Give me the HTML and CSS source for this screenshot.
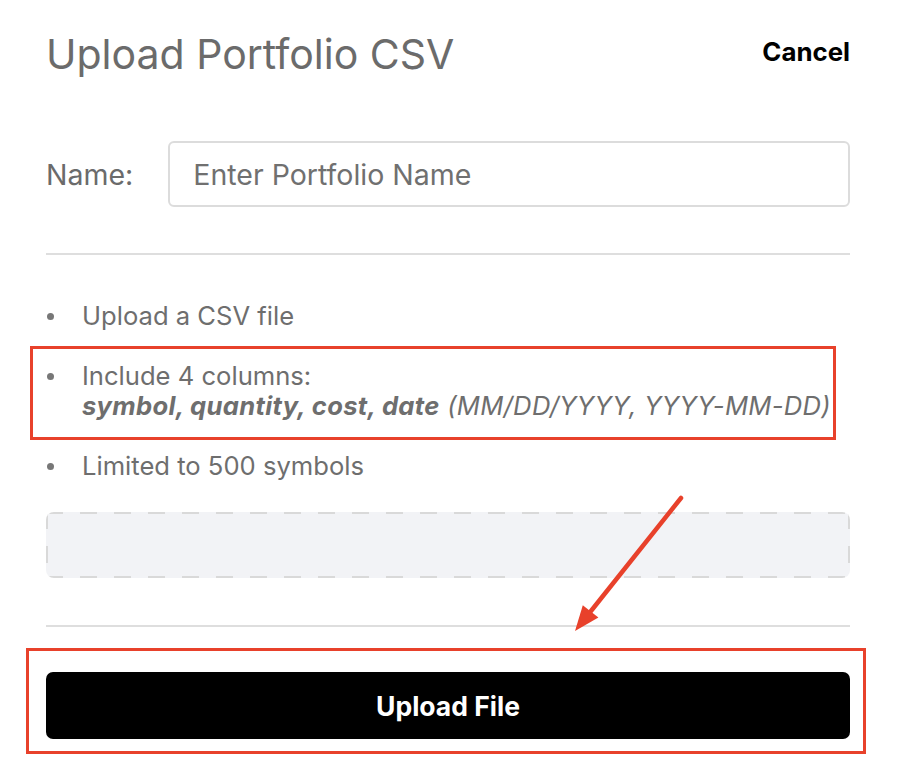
FILE: index.html
```html
<!DOCTYPE html>
<html lang="en">
<head>
<meta charset="utf-8">
<title>Upload Portfolio CSV</title>
<link rel="stylesheet" href="styles.css">
</head>
<body>
<div class="page">
  <header class="head">
    <h1 class="title">Upload Portfolio CSV</h1>
    <a class="cancel" href="#">Cancel</a>
  </header>

  <div class="name-row">
    <label class="name-label">Name:</label>
    <div class="input"><span class="placeholder">Enter Portfolio Name</span></div>
  </div>

  <hr class="divider divider-top">

  <ul class="rules">
    <li>Upload a CSV file</li>
    <li class="highlight">Include 4 columns:<br><span class="fmt"><b><i>symbol, quantity, cost, date</i></b> <i>(MM/DD/YYYY, YYYY-MM-DD)</i></span></li>
    <li>Limited to 500 symbols</li>
  </ul>

  <div class="dropzone"></div>

  <hr class="divider divider-bottom">

  <div class="btn-wrap">
    <button class="upload-btn">Upload File</button>
  </div>

  <svg class="arrow" width="900" height="768" viewBox="0 0 900 768">
    <line x1="681" y1="498" x2="591" y2="611" stroke="#e8412b" stroke-width="4.5" stroke-linecap="round"/>
    <polygon points="575,631 582.8,605.2 598.4,617.6" fill="#e8412b"/>
  </svg>
</div>
</body>
</html>
```

FILE: styles.css
```css
* { box-sizing: border-box; }

html, body {
  margin: 0;
  padding: 0;
  background: #ffffff;
}

body {
  font-family: Inter, "Noto Sans", "Liberation Sans", sans-serif;
  color: #6b6b6b;
}

.page {
  position: relative;
  width: 900px;
  height: 768px;
  padding: 30px 50px 0 46px;
  overflow: hidden;
}

.head {
  display: flex;
  align-items: center;
  justify-content: space-between;
  height: 48px;
}

.title {
  margin: 0;
  font-size: 41px;
  line-height: 48px;
  font-weight: 400;
  color: #6b6b6b;
}

.cancel {
  font-size: 25.8px;
  font-weight: 700;
  color: #000;
  text-decoration: none;
  margin-top: -6px;
}

.name-row {
  display: flex;
  align-items: center;
  gap: 35px;
  margin-top: 63px;
}

.name-label {
  font-size: 28.5px;
  color: #6b6b6b;
}

.input {
  flex: 1;
  height: 66px;
  border: 2px solid #dcdcdc;
  border-radius: 6px;
  display: flex;
  align-items: center;
  padding-left: 23px;
}

.placeholder {
  font-size: 28.5px;
  color: #707070;
}

.divider {
  border: 0;
  height: 2px;
  background: #dedede;
  margin: 0;
}

.divider-top { margin-top: 46px; }

.rules {
  list-style: none;
  margin: 46px 0 0;
  padding: 0;
  font-size: 25.6px;
  line-height: 30px;
  color: #6e6e6e;
}

.rules li {
  position: relative;
  padding-left: 36px;
  margin-bottom: 30px;
}

.rules li:last-child { margin-bottom: 0; }

.rules li::before {
  content: "";
  position: absolute;
  left: 1px;
  top: 12px;
  width: 7px;
  height: 7px;
  border-radius: 50%;
  background: #777;
}

.rules b { font-weight: 700; }

.fmt {
  white-space: nowrap;
  letter-spacing: 0.3px;
}

.highlight::after {
  content: "";
  position: absolute;
  top: -15px;
  bottom: -19px;
  left: -16px;
  right: 14px;
  border: 3px solid #e8412b;
  pointer-events: none;
}

.dropzone {
  margin-top: 31px;
  height: 66px;
  border-radius: 8px;
  background:
    repeating-linear-gradient(90deg, #d9d9d9 0 17px, transparent 17px 34px) top left / 100% 2px no-repeat,
    repeating-linear-gradient(90deg, #d9d9d9 0 17px, transparent 17px 34px) bottom left / 100% 2px no-repeat,
    repeating-linear-gradient(180deg, #d9d9d9 0 17px, transparent 17px 34px) top left / 2px 100% no-repeat,
    repeating-linear-gradient(180deg, #d9d9d9 0 17px, transparent 17px 34px) top right / 2px 100% no-repeat,
    #f2f3f6;
}

.divider-bottom { margin-top: 47px; }

.btn-wrap {
  position: relative;
  margin-top: 45px;
}

.btn-wrap::after {
  content: "";
  position: absolute;
  top: -24px;
  bottom: -15px;
  left: -20px;
  right: -16px;
  border: 3px solid #e8412b;
  pointer-events: none;
}

.upload-btn {
  display: block;
  width: 100%;
  height: 67px;
  border: 0;
  border-radius: 7px;
  background: #000;
  color: #fff;
  font-family: Inter, "Noto Sans", "Liberation Sans", sans-serif;
  font-size: 26.5px;
  font-weight: 700;
  cursor: pointer;
}

.arrow {
  position: absolute;
  left: 0;
  top: 0;
  pointer-events: none;
}
```
